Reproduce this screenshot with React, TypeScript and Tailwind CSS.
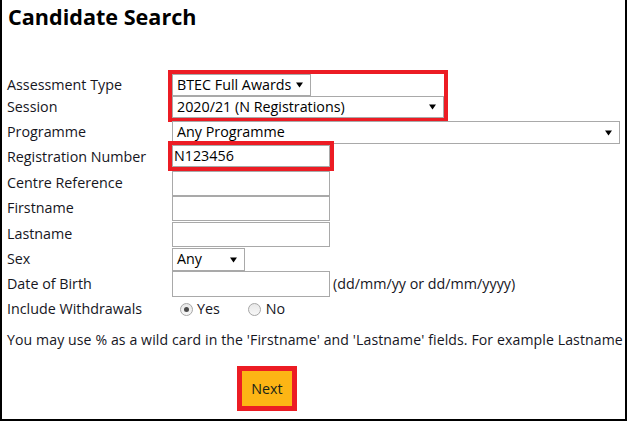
import React from "react";

const Arrow = () => (
  <svg width="7" height="6" viewBox="0 0 7 6" className="shrink-0">
    <polygon points="0,0.5 7,0.5 3.5,5.5" fill="#000" />
  </svg>
);

function Select({ text, w, h, mt = 0 }: { text: string; w: string; h: string; mt?: number }) {
  return (
    <div
      className={`flex items-center justify-between border border-[#a9a9a9] bg-white pl-[4px] pr-[7px] text-[14.3px] text-black ${w} ${h}`}
      style={{ marginTop: mt }}
    >
      <span className="whitespace-nowrap leading-none">{text}</span>
      <Arrow />
    </div>
  );
}

function Input({ text = "", h = "h-[25px]", mt = 0 }: { text?: string; h?: string; mt?: number }) {
  return (
    <div
      className={`flex items-center border border-[#a9a9a9] bg-white pl-[1px] w-[158px] text-[14.3px] text-black ${h}`}
      style={{ marginTop: mt }}
    >
      <span className="leading-none">{text}</span>
    </div>
  );
}

function Row({ label, h, children }: { label: string; h: string; children: React.ReactNode }) {
  return (
    <div className={`flex ${h}`}>
      <div className="w-[165px] flex items-center pb-[1px] text-[14.3px] text-[#16161e] whitespace-nowrap">{label}</div>
      <div className="flex items-start">{children}</div>
    </div>
  );
}

function Radio({ checked }: { checked?: boolean }) {
  return (
    <span className="w-[13px] h-[13px] rounded-full border border-[#a6a6a6] bg-gradient-to-b from-[#e8e8e8] to-[#f7f7f7] flex items-center justify-center shrink-0">
      {checked && <span className="w-[5px] h-[5px] rounded-full bg-[#4a4a4a]" />}
    </span>
  );
}

export default function App() {
  return (
    <div
      className="w-[627px] h-[421px] bg-white border-l-2 border-r-2 border-b-2 border-black overflow-hidden"
      style={{ fontFamily: '"Open Sans", sans-serif' }}
    >
      <div className="pl-[6px]">
        <h1 className="text-[21.6px] font-bold leading-[30px] mt-[2px] text-black">Candidate Search</h1>
      </div>
      <div className="pl-[5px] mt-[42px]">
        <div className="flex">
          <div className="w-[165px] flex flex-col text-[14.3px] text-[#16161e]">
            <div className="h-[22px] flex items-center pb-[1px]">Assessment Type</div>
            <div className="h-[23px] flex items-center pb-[1px]">Session</div>
          </div>
          <div className="w-[272px] h-[44px] outline-[4px] outline-solid outline-[#ec1c24] flex flex-col">
            <Select text="BTEC Full Awards" w="w-[139px]" h="h-[22px]" />
            <Select text="2020/21 (N Registrations)" w="w-[272px]" h="h-[22px]" />
          </div>
        </div>
        <Row label="Programme" h="h-[25px] mt-[1px]">
          <Select text="Any Programme" w="w-[448px]" h="h-[23px]" mt={1} />
        </Row>
        <Row label="Registration Number" h="h-[25px]">
          <div className="outline-[4px] outline-solid outline-[#ec1c24]">
            <Input text="N123456" h="h-[22px]" />
          </div>
        </Row>
        <Row label="Centre Reference" h="h-[26px]">
          <Input mt={1} />
        </Row>
        <Row label="Firstname" h="h-[25px]">
          <Input />
        </Row>
        <Row label="Lastname" h="h-[26px]">
          <Input mt={1} />
        </Row>
        <Row label="Sex" h="h-[24px]">
          <Select text="Any" w="w-[73px]" h="h-[23px]" mt={1} />
        </Row>
        <Row label="Date of Birth" h="h-[26px]">
          <div className="flex items-center">
            <Input h="h-[26px]" />
            <span className="ml-[3px] pb-[1px] text-[14.3px] text-[#16161e] whitespace-nowrap">(dd/mm/yy or dd/mm/yyyy)</span>
          </div>
        </Row>
        <div className="flex h-[24px]">
          <div className="w-[165px] flex items-center pb-[1px] text-[14.3px] text-[#16161e] whitespace-nowrap">Include Withdrawals</div>
          <div className="flex items-center pl-[8px] text-[14.3px] text-[#16161e]">
            <Radio checked />
            <span className="ml-[4px] pb-[1px]">Yes</span>
            <span className="ml-[28px]"><Radio /></span>
            <span className="ml-[5px] pb-[1px]">No</span>
          </div>
        </div>
        <p className="mt-[9px] text-[14.1px] tracking-[0.1px] leading-[19px] text-[#16161e] whitespace-nowrap">
          You may use % as a wild card in the 'Firstname' and 'Lastname' fields. For example Lastname
        </p>
        <div className="mt-[22px] pl-[235px]">
          <button className="w-[50px] h-[35px] bg-[#fdb515] outline-[5px] outline-solid outline-[#ec1c24] text-[14.3px] text-[#182418]">
            Next
          </button>
        </div>
      </div>
    </div>
  );
}
